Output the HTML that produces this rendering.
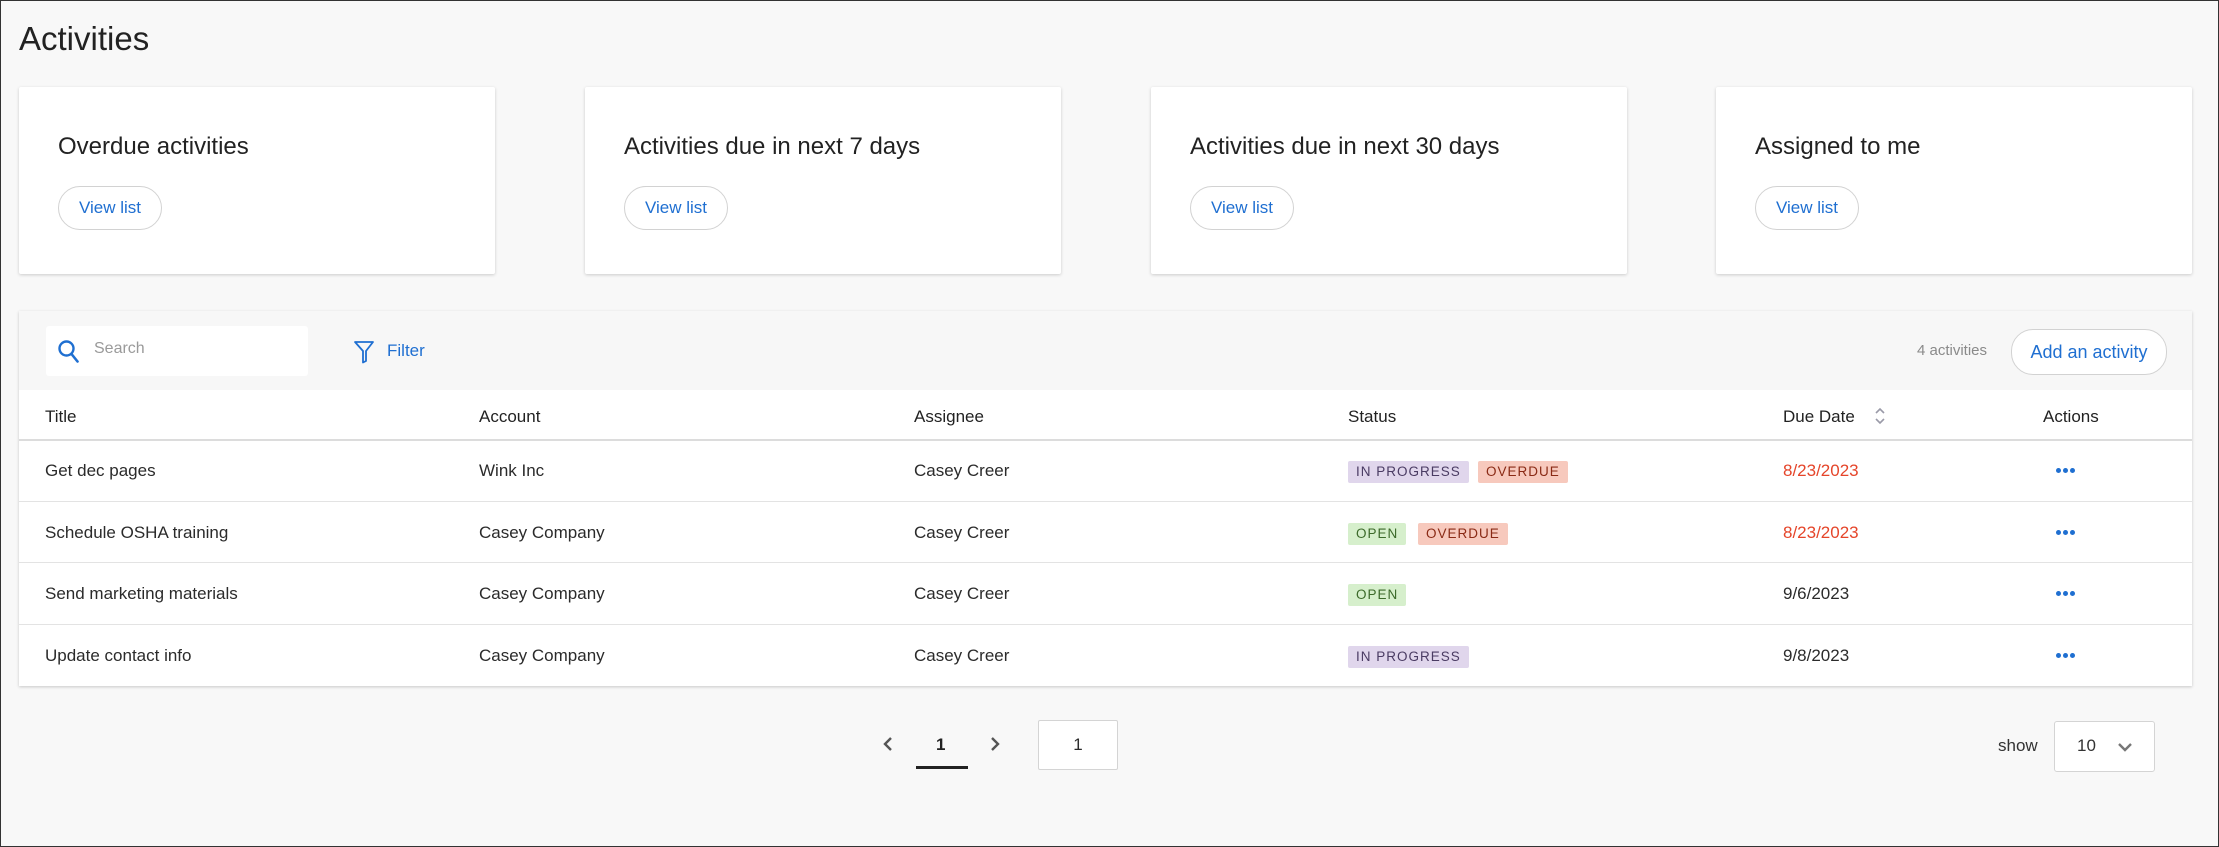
<!DOCTYPE html>
<html><head><meta charset="utf-8"><style>
*{box-sizing:border-box;margin:0;padding:0}
body{width:2219px;height:847px;background:#f8f8f8;font-family:"Liberation Sans",Arial,sans-serif;color:#2b2b2b;position:relative;overflow:hidden;border:1.5px solid #333}
.abs{position:absolute}
h1{position:absolute;left:18px;top:19px;font-size:33px;font-weight:400;color:#222}
.card{position:absolute;top:86px;height:187px;width:476px;background:#fff;box-shadow:0 1px 3px rgba(0,0,0,.18);border-radius:2px}
.card h2{position:absolute;left:39px;top:46px;font-size:24px;font-weight:400;color:#222;white-space:nowrap}
.btn{position:absolute;border:1.5px solid #d2d2d2;border-radius:22px;background:#fff;color:#1f6fd1;font-size:17px;display:flex;align-items:center;justify-content:center}
.card .btn{left:39px;top:99px;width:104px;height:44px}
.table{position:absolute;left:18px;top:310px;width:2173px;height:375px;background:#fff;box-shadow:0 1px 3px rgba(0,0,0,.2)}
.tool{position:absolute;left:0;top:0;width:100%;height:79px;background:#f7f7f7}
.hd{position:absolute;top:406px;font-size:17px;color:#222}
.row{position:absolute;left:18px;width:2173px;border-top:1.5px solid #e3e3e3}
.c{position:absolute;font-size:17px;color:#2b2b2b;white-space:nowrap}
.b{position:absolute;height:22px;font-size:13.5px;letter-spacing:1px;padding:0 8px;line-height:22px;border-radius:2px;white-space:nowrap}
.ip{background:#e0d6ec;color:#4a3b63}
.od{background:#f7c9bd;color:#8a2a15}
.op{background:#d6efcc;color:#3c6a2a}
.red{color:#e5452a}
.dots{position:absolute;left:2055px;font-size:0}
.dots i{display:inline-block;width:5px;height:5px;border-radius:50%;background:#1f6fd1;margin-right:2px}
</style></head><body>
<h1>Activities</h1>
<div class="card" style="left:18px"><h2>Overdue activities</h2><div class="btn">View list</div></div>
<div class="card" style="left:584px"><h2>Activities due in next 7 days</h2><div class="btn">View list</div></div>
<div class="card" style="left:1150px"><h2>Activities due in next 30 days</h2><div class="btn">View list</div></div>
<div class="card" style="left:1715px"><h2>Assigned to me</h2><div class="btn">View list</div></div>
<div class="table"><div class="tool"></div></div>
<div class="abs" style="left:45px;top:325px;width:262px;height:50px;background:#fff;border-radius:3px"></div>
<svg class="abs" style="left:56px;top:338px" width="24" height="26" viewBox="0 0 24 26"><circle cx="9.5" cy="9.5" r="7" fill="none" stroke="#1f6fd1" stroke-width="2.4"/><path d="M14.5 15l6 7.5" stroke="#1f6fd1" stroke-width="2.6" stroke-linecap="round"/></svg>
<div class="abs" style="left:93px;top:339px;font-size:16px;color:#9a9a9a">Search</div>
<svg class="abs" style="left:352px;top:339px" width="22" height="24" viewBox="0 0 22 24"><path d="M2 2h18l-7 9v10l-3 1.5V11z" fill="none" stroke="#1f6fd1" stroke-width="1.8" stroke-linejoin="round"/></svg>
<div class="abs" style="left:386px;top:340px;font-size:17px;color:#1f6fd1">Filter</div>
<div class="abs" style="left:1916px;top:341px;font-size:15px;color:#8a8a8a">4 activities</div>
<div class="btn" style="left:2010px;top:328px;width:156px;height:46px;font-size:18px">Add an activity</div>
<div class="hd" style="left:44px">Title</div>
<div class="hd" style="left:478px">Account</div>
<div class="hd" style="left:913px">Assignee</div>
<div class="hd" style="left:1347px">Status</div>
<div class="hd" style="left:1782px">Due Date</div>
<svg class="abs" style="left:1873px;top:405px" width="12" height="20" viewBox="0 0 12 20"><path d="M2 7l4-4 4 4M2 13l4 4 4-4" fill="none" stroke="#9a9aa8" stroke-width="1.6"/></svg>
<div class="hd" style="left:2042px">Actions</div>
<div class="row" style="top:438px;border-top:2px solid #dcdcdc"></div>
<div class="row" style="top:500px"></div>
<div class="row" style="top:561px"></div>
<div class="row" style="top:623px"></div>

<div class="c" style="left:44px;top:460px">Get dec pages</div>
<div class="c" style="left:478px;top:460px">Wink Inc</div>
<div class="c" style="left:913px;top:460px">Casey Creer</div>
<div class="b ip" style="left:1347px;top:460px">IN PROGRESS</div>
<div class="b od" style="left:1477px;top:460px">OVERDUE</div>
<div class="c red" style="left:1782px;top:460px">8/23/2023</div>
<div class="dots" style="top:467px"><i></i><i></i><i></i></div>

<div class="c" style="left:44px;top:522px">Schedule OSHA training</div>
<div class="c" style="left:478px;top:522px">Casey Company</div>
<div class="c" style="left:913px;top:522px">Casey Creer</div>
<div class="b op" style="left:1347px;top:522px">OPEN</div>
<div class="b od" style="left:1417px;top:522px">OVERDUE</div>
<div class="c red" style="left:1782px;top:522px">8/23/2023</div>
<div class="dots" style="top:529px"><i></i><i></i><i></i></div>

<div class="c" style="left:44px;top:583px">Send marketing materials</div>
<div class="c" style="left:478px;top:583px">Casey Company</div>
<div class="c" style="left:913px;top:583px">Casey Creer</div>
<div class="b op" style="left:1347px;top:583px">OPEN</div>
<div class="c" style="left:1782px;top:583px">9/6/2023</div>
<div class="dots" style="top:590px"><i></i><i></i><i></i></div>

<div class="c" style="left:44px;top:645px">Update contact info</div>
<div class="c" style="left:478px;top:645px">Casey Company</div>
<div class="c" style="left:913px;top:645px">Casey Creer</div>
<div class="b ip" style="left:1347px;top:645px">IN PROGRESS</div>
<div class="c" style="left:1782px;top:645px">9/8/2023</div>
<div class="dots" style="top:652px"><i></i><i></i><i></i></div>

<svg class="abs" style="left:881px;top:735px" width="12" height="16" viewBox="0 0 12 16"><path d="M9 2L3 8l6 6" fill="none" stroke="#555" stroke-width="2.4"/></svg>
<div class="abs" style="left:935px;top:734px;font-size:17px;font-weight:700;color:#222">1</div>
<div class="abs" style="left:915px;top:765px;width:52px;height:3px;background:#222"></div>
<svg class="abs" style="left:988px;top:735px" width="12" height="16" viewBox="0 0 12 16"><path d="M3 2l6 6-6 6" fill="none" stroke="#555" stroke-width="2.4"/></svg>
<div class="abs" style="left:1037px;top:719px;width:80px;height:50px;background:#fff;border:1.5px solid #d4d4d4;border-radius:2px;font-size:17px;text-align:center;line-height:47px">1</div>
<div class="abs" style="left:1997px;top:735px;font-size:17px;color:#333">show</div>
<div class="abs" style="left:2053px;top:720px;width:101px;height:51px;background:#fff;border:1.5px solid #d4d4d4;border-radius:3px"></div>
<div class="abs" style="left:2076px;top:735px;font-size:17px;color:#333">10</div>
<svg class="abs" style="left:2116px;top:740px" width="16" height="12" viewBox="0 0 16 12"><path d="M2 3l6 6 6-6" fill="none" stroke="#777" stroke-width="2.4"/></svg>
</body></html>
